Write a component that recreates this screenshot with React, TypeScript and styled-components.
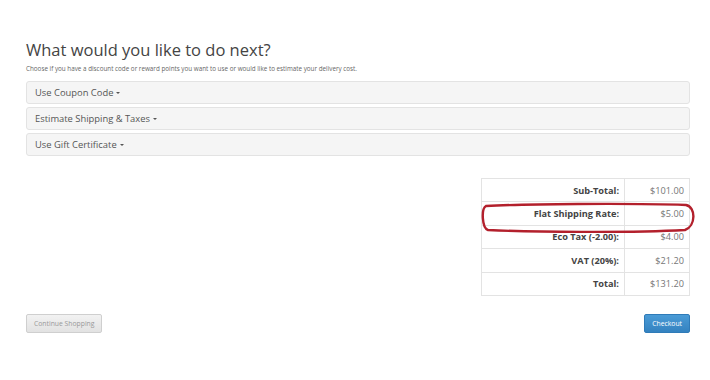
import styled, { createGlobalStyle } from 'styled-components'

const GlobalStyle = createGlobalStyle`
  body {
    margin: 0;
    background: #ffffff;
    font-family: "Open Sans", "Liberation Sans", sans-serif;
  }
`

const Page = styled.div`
  width: 710px;
  height: 380px;
  box-sizing: border-box;
  padding: 38px 20px 0 26px;
`

const Title = styled.h1`
  margin: 0;
  font-size: 16.5px;
  font-weight: 400;
  line-height: 24px;
  color: #444444;
`

const Intro = styled.p`
  margin: 2px 0 7px;
  font-size: 6.3px;
  line-height: 10px;
  color: #666666;
`

const PanelList = styled.div`
  display: flex;
  flex-direction: column;
  gap: 3px;
`

const Panel = styled.div`
  height: 23px;
  box-sizing: border-box;
  display: flex;
  align-items: center;
  padding-left: 8px;
  background: #f5f5f5;
  border: 1px solid #e3e3e3;
  border-radius: 3px;
  font-size: 9.4px;
  color: #555555;
`

const Caret = styled.span`
  display: inline-block;
  margin-left: 3px;
  width: 0;
  height: 0;
  border-left: 2.5px solid transparent;
  border-right: 2.5px solid transparent;
  border-top: 2.5px solid #555555;
  vertical-align: middle;
`

const TotalsWrap = styled.div`
  position: relative;
  display: flex;
  justify-content: flex-end;
  margin-top: 22px;
`

const Totals = styled.table`
  width: 209px;
  table-layout: fixed;
  border-collapse: collapse;
  font-size: 9.2px;
  color: #666666;
`

const Cell = styled.td<{ $label?: boolean }>`
  height: 23.4px;
  box-sizing: border-box;
  padding: 0 5px 0 0;
  border: 1px solid #e3e3e3;
  text-align: right;
  font-weight: ${(p) => (p.$label ? 700 : 400)};
  color: ${(p) => (p.$label ? '#444444' : '#777777')};
  width: ${(p) => (p.$label ? '143px' : 'auto')};
`

const Highlight = styled.svg`
  position: absolute;
  right: -8px;
  top: 24px;
  pointer-events: none;
`

const Actions = styled.div`
  display: flex;
  justify-content: space-between;
  margin-top: 18px;
`

const Button = styled.button<{ $primary?: boolean }>`
  height: 19px;
  padding: 0 7px;
  font-family: inherit;
  font-size: 6.8px;
  border-radius: 2px;
  border: 1px solid ${(p) => (p.$primary ? '#2f7bb8' : '#cfcfcf')};
  background: ${(p) =>
    p.$primary
      ? 'linear-gradient(#4a9bd6, #3482c0)'
      : 'linear-gradient(#f2f2f2, #e2e2e2)'};
  color: ${(p) => (p.$primary ? '#ffffff' : '#999999')};
`

const rows = [
  ['Sub-Total:', '$101.00'],
  ['Flat Shipping Rate:', '$5.00'],
  ['Eco Tax (-2.00):', '$4.00'],
  ['VAT (20%):', '$21.20'],
  ['Total:', '$131.20'],
]

const App = () => {
  return (
    <Page>
      <GlobalStyle />
      <Title>What would you like to do next?</Title>
      <Intro>
        Choose if you have a discount code or reward points you want to use or would like to estimate your delivery cost.
      </Intro>
      <PanelList>
        <Panel>
          Use Coupon Code <Caret />
        </Panel>
        <Panel>
          Estimate Shipping &amp; Taxes <Caret />
        </Panel>
        <Panel>
          Use Gift Certificate <Caret />
        </Panel>
      </PanelList>

      <TotalsWrap>
        <Totals>
          <tbody>
            {rows.map(([label, value]) => (
              <tr key={label}>
                <Cell $label>{label}</Cell>
                <Cell>{value}</Cell>
              </tr>
            ))}
          </tbody>
        </Totals>
        <Highlight width="218" height="32" viewBox="0 0 218 32">
          <path
            d="M6 4 C 40 2, 150 1, 206 3 C 216 5, 216 24, 205 28 C 150 31, 50 30, 8 28 C 2 26, 1 7, 6 4 Z"
            fill="none"
            stroke="#b3202c"
            strokeWidth="2.4"
          />
        </Highlight>
      </TotalsWrap>

      <Actions>
        <Button>Continue Shopping</Button>
        <Button $primary>Checkout</Button>
      </Actions>
    </Page>
  )
}

export default App
